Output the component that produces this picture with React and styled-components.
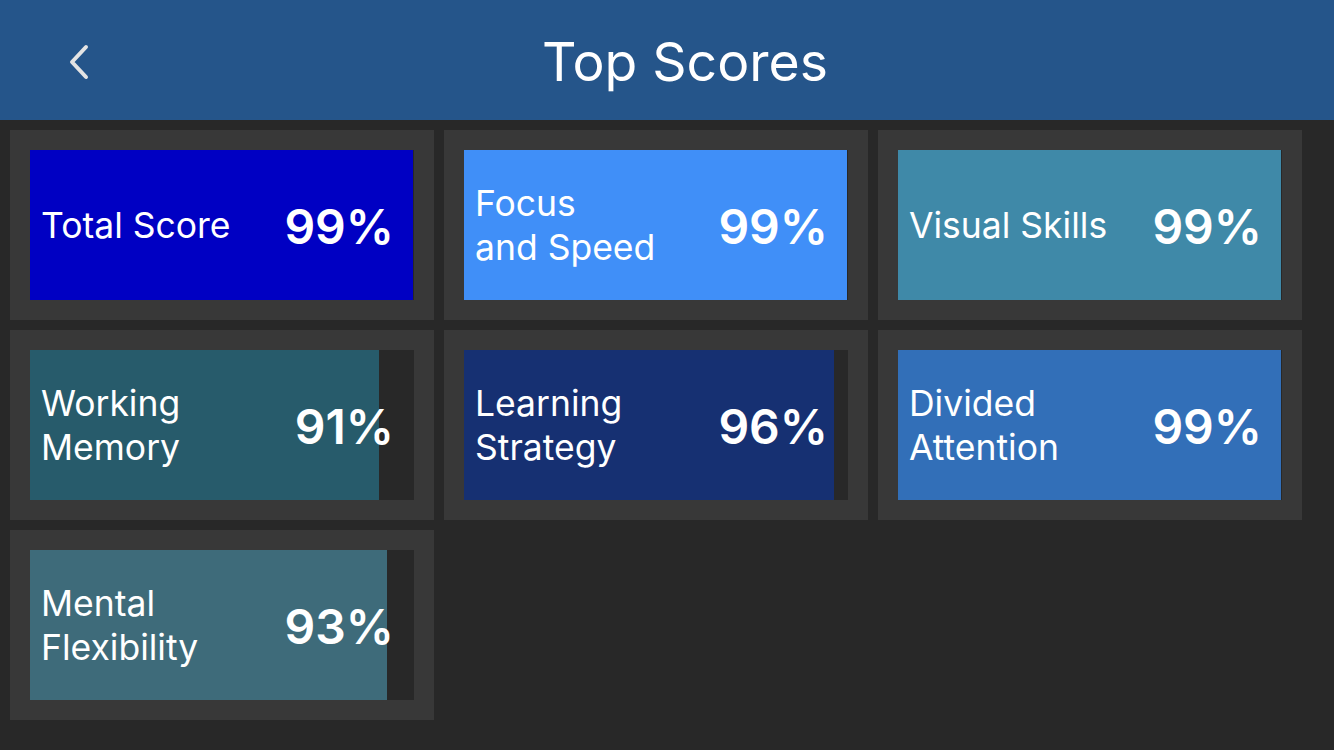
import React from 'react';
import styled, { createGlobalStyle } from 'styled-components';

const scores = [
  { label: 'Total Score', value: 99, fill: 99.7, color: '#0000c3' },
  { label: 'Focus\nand Speed', value: 99, fill: 99.7, color: '#408ff8' },
  { label: 'Visual Skills', value: 99, fill: 99.7, color: '#3f89a8' },
  { label: 'Working\nMemory', value: 91, fill: 91, color: '#275b6b' },
  { label: 'Learning\nStrategy', value: 96, fill: 96.4, color: '#163072' },
  { label: 'Divided\nAttention', value: 99, fill: 99.7, color: '#326fb8' },
  { label: 'Mental\nFlexibility', value: 93, fill: 93, color: '#3e6b7a' },
];

function lineBreak(str) {
  return str.split('\n').map((s, i) => <span key={i}>{s}</span>);
}

function ScoreCard({ label, value, fill, color }) {
  return (
    <Card>
      <Track $color={color} $fill={fill}>
        <Label>{lineBreak(label)}</Label>
        <Percent>{value}%</Percent>
      </Track>
    </Card>
  );
}

export default function App() {
  return (
    <>
      <Global />
      <Page>
        <Header>
          <BackButton aria-label="Back">
            <svg width="26" height="36" viewBox="0 0 26 36">
              <path
                d="M20 3 L6 18 L20 33"
                fill="none"
                stroke="#e4e4e4"
                strokeWidth="4"
                strokeLinecap="round"
                strokeLinejoin="round"
              />
            </svg>
          </BackButton>
          <Title>Top Scores</Title>
        </Header>
        <Grid>
          {scores.map(s => (
            <ScoreCard key={s.label} {...s} />
          ))}
        </Grid>
      </Page>
    </>
  );
}

const Global = createGlobalStyle`
  html, body {
    margin: 0;
    padding: 0;
    background: #282828;
  }
  body {
    font-family: Inter, "Noto Sans", "Liberation Sans", sans-serif;
    color: #fff;
  }
`;

const Page = styled.div`
  width: 1334px;
  height: 750px;
  background: #282828;
  display: flex;
  flex-direction: column;
`;

const Header = styled.header`
  height: 120px;
  background: #25558a;
  display: flex;
  align-items: center;
  padding: 0 0 0 64px;
  box-sizing: border-box;
`;

const BackButton = styled.div`
  width: 30px;
  height: 40px;
  display: flex;
  align-items: center;
  justify-content: center;
  margin-top: 3px;
`;

const Title = styled.h1`
  flex: 1;
  margin: 2px 0 0 0;
  padding-right: 58px;
  text-align: center;
  font-size: 53.5px;
  font-weight: 400;
  color: #fff;
`;

const Grid = styled.div`
  display: grid;
  grid-template-columns: repeat(3, 424px);
  grid-auto-rows: 190px;
  gap: 10px;
  padding: 10px;
`;

const Card = styled.div`
  background: #383838;
  padding: 20px;
  display: flex;
`;

const Track = styled.div`
  flex: 1;
  display: flex;
  align-items: center;
  justify-content: space-between;
  padding: 0 20px 0 11px;
  background: linear-gradient(
    to right,
    ${p => p.$color} ${p => p.$fill}%,
    #282828 ${p => p.$fill}%
  );
`;

const Label = styled.div`
  display: flex;
  flex-direction: column;
  font-size: 35.5px;
  line-height: 44px;
  font-weight: 400;
  margin-top: 2px;
`;

const Percent = styled.div`
  font-size: 48px;
  font-weight: 600;
  margin-top: 2px;
`;
